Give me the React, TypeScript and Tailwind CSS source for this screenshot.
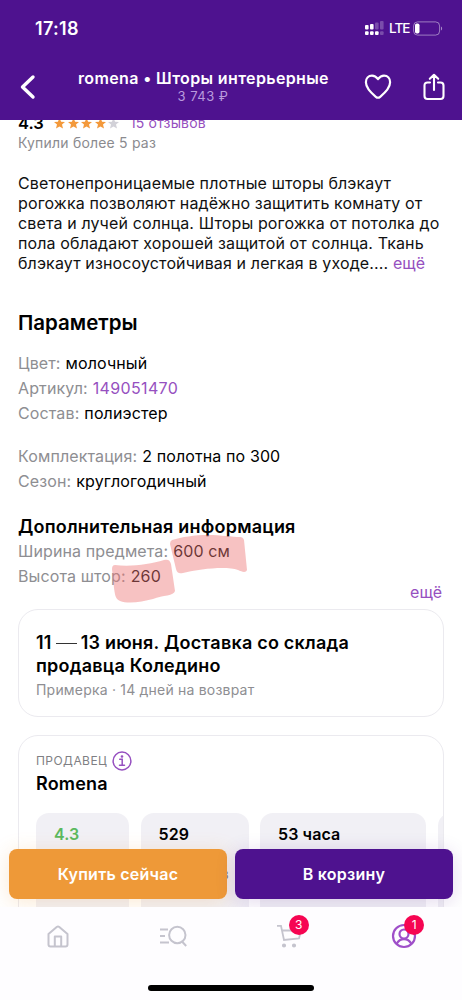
import type { ReactNode } from "react";

const DESCRIPTION = [
  "Светонепроницаемые плотные шторы блэкаут",
  "рогожка позволяют надёжно защитить комнату от",
  "света и лучей солнца. Шторы рогожка от потолка до",
  "пола обладают хорошей защитой от солнца. Ткань",
];

export default function App() {
  return (
    <div className="relative flex h-[1000px] w-[462px] flex-col overflow-hidden bg-white font-['Inter','Liberation_Sans',sans-serif] text-[#111]">
      <Header />

      <main className="min-h-0 flex-1 overflow-hidden px-[18px]">
        <Rating />

        <p className="mt-[20px] text-[16px] leading-[20px] tracking-[0.13px]">
          {DESCRIPTION.map((line) => (
            <span key={line} className="block whitespace-nowrap">
              {line}
            </span>
          ))}
          <span className="block whitespace-nowrap">
            блэкаут износоустойчивая и легкая в уходе....{" "}
            <a className="text-[#9650c0]">ещё</a>
          </span>
        </p>

        <h2 className="mt-[37px] text-[20.5px] leading-[26px] font-semibold text-black">
          Параметры
        </h2>
        <dl className="mt-[15px]">
          <Param label="Цвет">молочный</Param>
          <Param label="Артикул">
            <a className="tracking-[0.35px] text-[#9650c0]">149051470</a>
          </Param>
          <Param label="Состав">полиэстер</Param>
          <div className="h-[18.5px]" />
          <Param label="Комплектация">2 полотна по 300</Param>
          <Param label="Сезон">круглогодичный</Param>
        </dl>

        <h3 className="mt-[22px] text-[18px] leading-[24px] font-semibold tracking-[0.2px] text-black">
          Дополнительная информация
        </h3>
        <dl className="relative">
          <Param label="Ширина предмета">600 см</Param>
          <Param label="Высота штор">260</Param>
          <Marker />
        </dl>
        <div className="-mt-[6px] pr-[2px] text-right text-[16px] leading-[20px]">
          <a className="text-[#9650c0]">ещё</a>
        </div>

        <Delivery />
        <Seller />
      </main>

      <BuyBar />
      <TabBar />
    </div>
  );
}

function Header() {
  return (
    <header className="h-[120px] shrink-0 bg-[#4e128f] text-white">
      <div className="flex h-[56px] items-center justify-between pr-[19px] pl-[35px]">
        <span className="text-[18px] font-semibold tracking-[0.3px]">17:18</span>
        <div className="flex items-center">
          <svg width="20" height="16" viewBox="0 0 20 16" fill="#fff">
            <rect x="0" y="5" width="3.600" height="4.500" rx="1" />
            <rect x="5" y="4" width="3.600" height="5.500" rx="1" />
            <rect x="10" y="2.500" width="3.600" height="7" rx="1" opacity=".25" />
            <rect x="15" y="1" width="3.600" height="8.500" rx="1" opacity=".25" />
            <rect x="0" y="11.300" width="3.600" height="3.700" rx="1" />
            <rect x="5" y="11.300" width="3.600" height="3.700" rx="1" />
            <rect x="10" y="11.300" width="3.600" height="3.700" rx="1" />
            <rect x="15" y="11.300" width="3.600" height="3.700" rx="1" opacity=".25" />
          </svg>
          <span className="ml-1 w-[24px] text-[13.5px] font-medium tracking-[-0.9px]">
            LTE
          </span>
          <svg width="30" height="15" viewBox="0 0 30 15" fill="none">
            <rect x=".6" y=".9" width="26" height="13.200" rx="4" stroke="#fff" strokeOpacity=".45" />
            <rect x="2" y="2.500" width="4.500" height="10" rx="1.800" fill="#fff" />
            <path d="M28 5.500c1.500.5 1.500 3.500 0 4z" fill="#fff" opacity=".5" />
          </svg>
        </div>
      </div>
      <div className="flex h-[64px] items-center pr-[17px] pl-[19px]">
        <svg width="18" height="26" viewBox="0 0 18 26" className="mb-[3px]" fill="none" stroke="#fff" strokeWidth="3.400" strokeLinecap="round" strokeLinejoin="round">
          <path d="M14 3 3.500 13 14 23" />
        </svg>
        <div className="mb-[3px] ml-[41px] w-[250px] text-center">
          <div className="text-[16px] leading-[20px] font-semibold tracking-[0.36px] whitespace-nowrap">
            romena • Шторы интерьерные
          </div>
          <div className="text-[13px] leading-[17px] tracking-[0.5px] text-[#b99bdd]">
            3 743 ₽
          </div>
        </div>
        <div className="mb-[3px] ml-auto flex items-center gap-[31px]">
          <svg width="28" height="26" viewBox="0 0 28 26" fill="none" stroke="#fff" strokeWidth="2.200" strokeLinejoin="round">
            <path d="M14 5.200C12.200 2.800 10.200 1.700 8 1.700 4.400 1.700 1.900 4.500 1.900 8.300c0 5.700 5.300 10.700 9.900 14.500q2.200 1.800 4.400 0c4.600-3.800 9.900-8.800 9.900-14.500 0-3.800-2.500-6.600-6.100-6.600-2.200 0-4.200 1.100-6 3.500z" />
          </svg>
          <svg width="22" height="28" viewBox="0 0 22 28" fill="none" stroke="#fff" strokeWidth="2.100" strokeLinecap="round" strokeLinejoin="round">
            <path d="M7 9.500H4.500q-3 0-3 3V23q0 3 3 3h13q3 0 3-3V12.500q0-3-3-3H15M11 17V2M6.800 5.800 11 1.800l4.200 4" />
          </svg>
        </div>
      </div>
    </header>
  );
}

function Rating() {
  return (
    <div>
      <div className="-mt-[7px] flex h-[20px] items-center leading-[20px]">
        <span className="w-[36px] text-[16.5px] font-semibold text-black">4.3</span>
        <div className="flex w-[76px] gap-[2.500px]">
          {[1, 2, 3, 4, 5].map((n) => (
            <svg key={n} width="11" height="11" viewBox="0 0 11 11" fill={n < 5 ? "#f3993b" : "#d2d1d8"}>
              <path d="M5.500 0 7.100 3.700 11 4 8 6.600 9 10.500 5.500 8.400 2 10.500 3 6.600 0 4 3.900 3.700z" />
            </svg>
          ))}
        </div>
        <a className="text-[14px] tracking-[0.15px] text-[#9650c0]">15 отзывов</a>
      </div>
      <div className="text-[14px] leading-[20px] tracking-[0.2px] text-[#8b8b8f]">
        Купили более 5 раз
      </div>
    </div>
  );
}

function Param({ label, children }: { label: string; children: ReactNode }) {
  return (
    <div className="flex h-[24.7px] items-center gap-[5px] text-[16px] tracking-[0.12px] whitespace-nowrap">
      <dt className="text-[#8e8e92]">{label}:</dt>
      <dd className="text-black">{children}</dd>
    </div>
  );
}

// Мазки маркером поверх размеров
function Marker() {
  return (
    <svg className="absolute top-[-4px] left-[92px]" width="140" height="72" viewBox="0 0 140 72" fill="#ee7777" fillOpacity=".45">
      <path d="M62 5C72 2 84 0 98 0c14 0 24 2 32 2q3 0 4 3l3 30c-1 3-5 2-9 0-12-4-38-1-55 3-4 1-6 0-7-4L60 9q0-3 2-4z" />
      <path d="M5 30c17 2 35-1 49-5 4-1 6 0 7 4l4 27c-1 5-12 4-22 8-11 3-25 5-33 2-5-2-5-7-6-13L2 34q0-4 3-4z" />
    </svg>
  );
}

function Delivery() {
  return (
    <section className="mt-[7px] h-[108px] rounded-[20px] border-[1.5px] border-[#ebeaef] px-[17px] pt-[22px]">
      <h3 className="text-[18px] leading-[22.5px] font-semibold tracking-[0.22px] whitespace-nowrap text-black">
        <span className="flex items-center">
          11
          <span className="mx-1 h-[1.5px] w-[21px] bg-[#333]" />
          13 июня. Доставка со склада
        </span>
        <span className="block">продавца Коледино</span>
      </h3>
      <p className="mt-[4px] text-[14px] leading-[18px] tracking-[0.2px] text-[#8e8e92]">
        Примерка · 14 дней на возврат
      </p>
    </section>
  );
}

function Seller() {
  return (
    <section className="mt-[18px] h-[260px] overflow-hidden rounded-[20px] border-[1.5px] border-[#ebeaef] pt-[15px] pl-[17px]">
      <div className="flex h-[20px] items-center gap-[5px] text-[12px] tracking-[0.45px] text-[#7f7f84]">
        ПРОДАВЕЦ
        <svg width="20" height="20" viewBox="0 0 20 20" fill="none" stroke="#9650c0" strokeWidth="1.500">
          <circle cx="10" cy="10" r="8.900" />
          <path d="M7.700 8.300h2.500v6M7.500 14.300h5" strokeLinecap="round" />
          <circle cx="10" cy="5.500" r=".6" fill="#9650c0" />
        </svg>
      </div>
      <div className="mt-[2px] text-[18px] leading-[22px] font-semibold tracking-[0.2px] text-black">
        Romena
      </div>
      <div className="mt-[18px] flex gap-[11.500px]">
        <Stat className="w-[93px] text-[#5bb95e]" value="4.3" />
        <Stat className="w-[108px] text-black" value="529" hint="товаров" />
        <Stat className="w-[166px] text-black" value="53 часа" />
        <Stat className="w-[93px] text-black" value="" />
      </div>
    </section>
  );
}

function Stat({ value, hint, className }: { value: string; hint?: string; className: string }) {
  return (
    <div className={`h-[120px] shrink-0 rounded-[13px] bg-[#f1f0f5] px-[18px] pt-[10px] ${className}`}>
      <div className="text-[16px] leading-[22px] font-semibold tracking-[0.1px]">{value}</div>
      {hint && <div className="mt-5 pr-[2px] text-right text-[13px] text-[#77777c]">{hint}</div>}
    </div>
  );
}

function BuyBar() {
  const button =
    "flex h-full flex-1 items-center justify-center rounded-lg text-[16px] font-semibold tracking-[0.25px] text-white";

  return (
    <div className="absolute inset-x-0 top-[849px] flex h-[50px] gap-2 px-[9px]">
      <button className={`${button} bg-[#ee9938] shadow-[0_3px_20px_rgba(238,153,56,0.22)]`}>
        Купить сейчас
      </button>
      <button className={`${button} bg-[#4e128f] shadow-[0_3px_20px_rgba(78,18,143,0.16)]`}>
        В корзину
      </button>
    </div>
  );
}

function TabBar() {
  return (
    <nav className="relative h-[93px] shrink-0 bg-[#fefdff]">
      <div className="grid grid-cols-4 justify-items-center pt-[15.5px]">
        <svg width="26" height="26" viewBox="0 0 26 26" fill="none" stroke="#c5c4ce" strokeWidth="2" strokeLinejoin="round">
          <path d="M3.500 11 11.700 4q1.300-1 2.600 0l8.200 7v10.500q0 2-2 2h-15q-2 0-2-2zM9.800 23v-9.500h6.400V23" />
        </svg>
        <svg width="28" height="26" viewBox="0 0 28 26" fill="none" stroke="#c5c4ce" strokeWidth="2">
          <path d="M1 6.500h8M1 13h5M1 19.500h9M23 18.500l4.200 4.500" />
          <circle cx="18.300" cy="12" r="8.200" />
        </svg>
        <span className="relative">
          <svg width="26" height="26" viewBox="0 0 26 26" fill="none" stroke="#c5c4ce" strokeWidth="1.800">
            <path d="M1 2.800h4l3 14.200 15-1.500 2-8H6" />
            <circle cx="8" cy="22.500" r="1.200" fill="#c5c4ce" />
            <circle cx="18" cy="22.500" r="1.200" fill="#c5c4ce" />
          </svg>
          <Badge>3</Badge>
        </span>
        <span className="relative">
          <svg width="26" height="26" viewBox="0 0 26 26" fill="none" stroke="#9f4fc9" strokeWidth="2.200">
            <circle cx="13" cy="13" r="11" />
            <circle cx="13" cy="11" r="4.500" />
            <path d="M5.500 21c1.800-3.200 4.300-4.800 7.500-4.800s5.700 1.600 7.500 4.800" />
          </svg>
          <Badge>1</Badge>
        </span>
      </div>
      <div className="absolute bottom-[9px] left-[148px] h-[6px] w-[166px] rounded-full bg-black" />
    </nav>
  );
}

function Badge({ children }: { children: ReactNode }) {
  return (
    <span className="absolute top-[-7.5px] left-[13px] flex size-[20px] items-center justify-center rounded-full bg-[#f60552] text-[12px] text-white">
      {children}
    </span>
  );
}
